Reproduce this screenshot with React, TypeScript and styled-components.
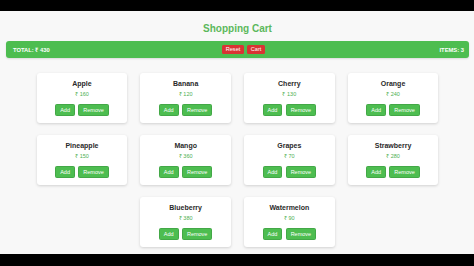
import React, { useState } from "react";
import styled, { createGlobalStyle } from "styled-components";

const GlobalStyle = createGlobalStyle`
  html, body { margin: 0; padding: 0; background: #000; }
  body { font-family: "Liberation Sans", Arial, sans-serif; }
  * { box-sizing: border-box; }
`;

const Frame = styled.div`
  width: 474px;
  height: 266px;
  display: flex;
  flex-direction: column;
  background: #000;
  overflow: hidden;
`;

const Letterbox = styled.div<{ $h: number }>`
  height: ${(p) => p.$h}px;
  flex: none;
  background: #000;
`;

const Page = styled.main`
  flex: 1;
  background: #f8f8f8;
  padding: 0 5px 0 6px;
  display: flex;
  flex-direction: column;
`;

const Title = styled.h1`
  margin: 12px 0 0;
  font-size: 10px;
  line-height: 12px;
  font-weight: 700;
  text-align: center;
  color: #5cb85c;
`;

const Bar = styled.div`
  margin-top: 6.3px;
  height: 16.7px;
  background: #4dbd50;
  border-radius: 3px;
  display: flex;
  align-items: center;
  justify-content: space-between;
  padding: 0 5px 0 7px;
  color: #fff;
  font-size: 5.8px;
  font-weight: 700;
  box-shadow: 0 1px 2px rgba(0, 0, 0, 0.12);
`;

const BarGroup = styled.div`
  display: flex;
  gap: 3.5px;
  margin-right: 2px;
`;

const RedButton = styled.button`
  height: 9.5px;
  padding: 0 3.5px;
  border: none;
  border-radius: 1.5px;
  background: #d93333;
  color: #fff;
  font-family: inherit;
  font-size: 5.6px;
  line-height: 9.5px;
`;

const Grid = styled.div`
  width: 403px;
  margin: 15.3px auto 0;
  display: flex;
  flex-wrap: wrap;
  justify-content: center;
  column-gap: 13px;
  row-gap: 12.6px;
`;

const Card = styled.div`
  width: 90.7px;
  height: 49.4px;
  background: #fff;
  border-radius: 3px;
  box-shadow: 0 1px 3px rgba(0, 0, 0, 0.16);
  padding-top: 7px;
  display: flex;
  flex-direction: column;
  align-items: center;
`;

const Name = styled.div`
  font-size: 7px;
  line-height: 8px;
  font-weight: 700;
  color: #2a2a2a;
`;

const Price = styled.div`
  margin-top: 3px;
  font-size: 5.5px;
  line-height: 6.5px;
  color: #4caf50;
`;

const Actions = styled.div`
  margin-top: 6.3px;
  display: flex;
  gap: 3.3px;
`;

const GreenButton = styled.button`
  height: 11.7px;
  padding: 0 4px;
  border: 0.5px solid #43a847;
  border-radius: 1.5px;
  background: #4dbd50;
  color: #fff;
  font-family: inherit;
  font-size: 5.5px;
  line-height: 10px;
`;

const items = [
  { name: "Apple", price: 160 },
  { name: "Banana", price: 120 },
  { name: "Cherry", price: 130 },
  { name: "Orange", price: 240 },
  { name: "Pineapple", price: 150 },
  { name: "Mango", price: 360 },
  { name: "Grapes", price: 70 },
  { name: "Strawberry", price: 280 },
  { name: "Blueberry", price: 380 },
  { name: "Watermelon", price: 90 },
];

export default function App() {
  const [total] = useState(430);
  const [count] = useState(3);
  return (
    <>
      <GlobalStyle />
      <Frame>
        <Letterbox $h={11} />
        <Page>
          <Title>Shopping Cart</Title>
          <Bar>
            <span>TOTAL: ₹ {total}</span>
            <BarGroup>
              <RedButton>Reset</RedButton>
              <RedButton>Cart</RedButton>
            </BarGroup>
            <span>ITEMS: {count}</span>
          </Bar>
          <Grid>
            {items.map((it) => (
              <Card key={it.name}>
                <Name>{it.name}</Name>
                <Price>₹ {it.price}</Price>
                <Actions>
                  <GreenButton>Add</GreenButton>
                  <GreenButton>Remove</GreenButton>
                </Actions>
              </Card>
            ))}
          </Grid>
        </Page>
        <Letterbox $h={12} />
      </Frame>
    </>
  );
}
